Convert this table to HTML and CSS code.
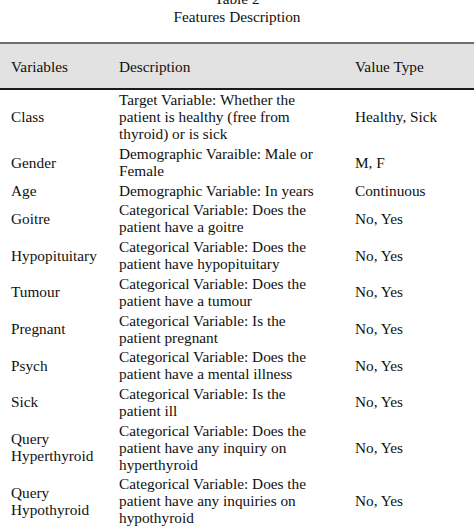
FILE: index.html
```html
<!DOCTYPE html>
<html lang="en">
<head>
<meta charset="utf-8">
<title>Features Description</title>
<link rel="stylesheet" href="styles.css">
</head>
<body>
<div class="caption">
  <div>Table 2</div>
  <div>Features Description</div>
</div>
<table class="features">
  <thead>
    <tr>
      <th class="c1">Variables</th>
      <th class="c2">Description</th>
      <th class="c3">Value Type</th>
    </tr>
  </thead>
  <tbody>
    <tr><td>Class</td><td>Target Variable: Whether the<br>patient is healthy (free from<br>thyroid) or is sick</td><td>Healthy, Sick</td></tr>
    <tr><td>Gender</td><td>Demographic Varaible: Male or<br>Female</td><td>M, F</td></tr>
    <tr><td>Age</td><td>Demographic Variable: In years</td><td>Continuous</td></tr>
    <tr><td>Goitre</td><td>Categorical Variable: Does the<br>patient have a goitre</td><td>No, Yes</td></tr>
    <tr><td>Hypopituitary</td><td>Categorical Variable: Does the<br>patient have hypopituitary</td><td>No, Yes</td></tr>
    <tr><td>Tumour</td><td>Categorical Variable: Does the<br>patient have a tumour</td><td>No, Yes</td></tr>
    <tr><td>Pregnant</td><td>Categorical Variable: Is the<br>patient pregnant</td><td>No, Yes</td></tr>
    <tr><td>Psych</td><td>Categorical Variable: Does the<br>patient have a mental illness</td><td>No, Yes</td></tr>
    <tr><td>Sick</td><td>Categorical Variable: Is the<br>patient ill</td><td>No, Yes</td></tr>
    <tr><td>Query<br>Hyperthyroid</td><td>Categorical Variable: Does the<br>patient have any inquiry on<br>hyperthyroid</td><td>No, Yes</td></tr>
    <tr><td>Query<br>Hypothyroid</td><td>Categorical Variable: Does the<br>patient have any inquiries on<br>hypothyroid</td><td>No, Yes</td></tr>
  </tbody>
</table>
</body>
</html>
```

FILE: styles.css
```css
html, body {
  margin: 0;
  padding: 0;
  background: #ffffff;
}
body {
  font-family: "Liberation Serif", "Times New Roman", serif;
  font-size: 15.3px;
  color: #111111;
  overflow: hidden;
}
.caption {
  text-align: center;
  line-height: 18px;
  margin-top: -10px;
}
.features {
  width: 100%;
  margin-top: 16px;
  border-collapse: collapse;
  table-layout: fixed;
}
.features th,
.features td {
  text-align: left;
  vertical-align: middle;
  font-weight: normal;
  padding: 1.4px 0 1.3px 11px;
  line-height: 17px;
  white-space: nowrap;
}
.features thead tr {
  background: #e2e2e2;
  border-top: 2px solid #6e6e6e;
  border-bottom: 2px solid #1c1c1c;
}
.features th {
  padding-top: 14px;
  padding-bottom: 12px;
  line-height: 18px;
}
.features .c1 { width: 97px; }
.features .c2 { width: 225px; }
.features .c3 { width: auto; }
```
